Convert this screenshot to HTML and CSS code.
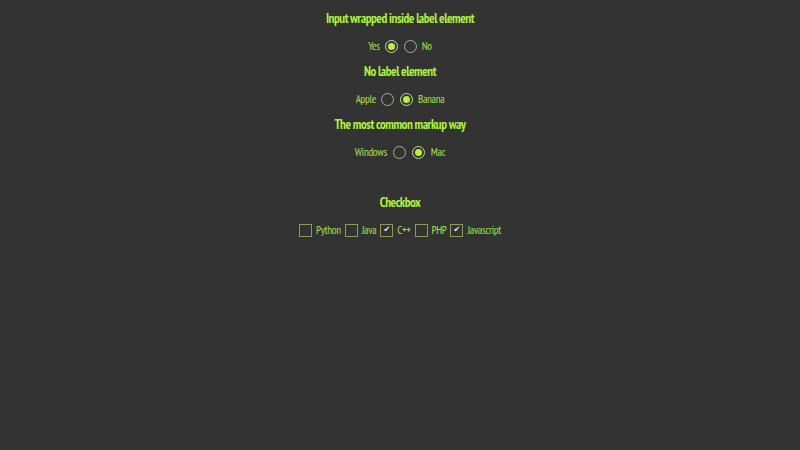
FILE: index.html
```html
<!DOCTYPE html>
<html lang="en">
<head>
<meta charset="utf-8">
<title>Radio and checkbox</title>
<link rel="stylesheet" href="styles.css">
</head>
<body>
<main class="page">
  <section class="group">
    <h3 class="title">Input wrapped inside label element</h3>
    <div class="row">
      <label class="opt">Yes <input class="radio" type="radio" name="q1" checked></label>
      <label class="opt"><input class="radio" type="radio" name="q1"> No</label>
    </div>
  </section>
  <section class="group">
    <h3 class="title">No label element</h3>
    <div class="row">
      <span class="opt">Apple <input class="radio" type="radio" name="q2"></span>
      <span class="opt"><input class="radio" type="radio" name="q2" checked> Banana</span>
    </div>
  </section>
  <section class="group">
    <h3 class="title">The most common markup way</h3>
    <div class="row">
      <label class="opt" for="w">Windows</label> <input class="radio" id="w" type="radio" name="q3">
      <input class="radio" id="m" type="radio" name="q3" checked> <label class="opt" for="m">Mac</label>
    </div>
  </section>
  <section class="group checks">
    <h3 class="title">Checkbox</h3>
    <div class="row">
      <label class="opt"><input class="check" type="checkbox"> Python</label>
      <label class="opt"><input class="check" type="checkbox"> Java</label>
      <label class="opt"><input class="check" type="checkbox" checked> C++</label>
      <label class="opt"><input class="check" type="checkbox"> PHP</label>
      <label class="opt"><input class="check" type="checkbox" checked> Javascript</label>
    </div>
  </section>
</main>
</body>
</html>
```

FILE: styles.css
```css
html, body {
  margin: 0;
  padding: 0;
  background: #333333;
  height: 100%;
}
body {
  color: #adf23a;
  font-family: "PT Sans Narrow", "Open Sans", sans-serif;
}
.page {
  display: flex;
  flex-direction: column;
  align-items: center;
  padding-top: 10px;
}
.group {
  display: flex;
  flex-direction: column;
  align-items: center;
  gap: 8px;
  margin-bottom: 7px;
}
.checks {
  margin-top: 25px;
}
.title {
  margin: 0;
  font-size: 13px;
  line-height: 18px;
  font-weight: bold;
  letter-spacing: -0.45px;
}
.row {
  display: flex;
  align-items: center;
  justify-content: center;
  height: 20px;
  font-size: 11px;
  letter-spacing: -0.3px;
  gap: 6px;
}
.opt {
  display: inline-flex;
  align-items: center;
  gap: 5px;
  color: #a8e04a;
}
.checks .row {
  gap: 4px;
}
.checks .opt {
  gap: 4px;
}
.radio {
  appearance: none;
  -webkit-appearance: none;
  margin: 0;
  width: 13px;
  height: 13px;
  border: 1px solid #a9b090;
  border-radius: 50%;
  box-sizing: border-box;
  display: inline-flex;
  align-items: center;
  justify-content: center;
  background: transparent;
}
.radio:checked {
  border-color: #c3e08a;
}
.radio:checked::after {
  content: "";
  width: 7px;
  height: 7px;
  border-radius: 50%;
  background: #b4f03c;
}
.check {
  appearance: none;
  -webkit-appearance: none;
  margin: 0;
  width: 13px;
  height: 13px;
  border: 1px solid #8c9a5a;
  box-sizing: border-box;
  display: inline-flex;
  align-items: center;
  justify-content: center;
  background: transparent;
}
.check:checked::after {
  content: "\2714";
  font-family: "DejaVu Sans", sans-serif;
  font-size: 8px;
  line-height: 1;
  color: #f0f0e0;
}
```
